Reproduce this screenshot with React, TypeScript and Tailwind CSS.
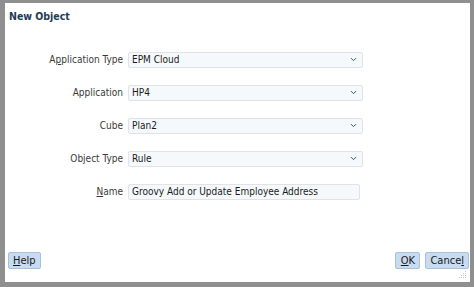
import { ChevronDown } from "lucide-react"

const font = { fontFamily: '"DejaVu Sans Condensed", "Liberation Sans", Arial, sans-serif' }

const fieldCls =
  "h-[16px] flex items-center bg-[#f6f9fc] border border-[#dfe3e8] rounded-[2px] text-[10px] text-[#1a1a1a]"
const btnCls =
  "h-[17px] px-[4px] bg-[#c8dcf1] border border-[#a9c0d8] rounded-[2px] text-[11px] leading-none text-[#1a1a1a]"

function Select({ value }: { value: string }) {
  return (
    <div className={`${fieldCls} w-[235px] justify-between pl-[3px] pr-[4px]`}>
      <span>{value}</span>
      <ChevronDown className="w-[9px] h-[9px] text-[#444]" strokeWidth={2.5} />
    </div>
  )
}

function Row({ label, children }: { label: React.ReactNode; children: React.ReactNode }) {
  return (
    <div className="flex items-center h-[17px]">
      <div className="w-[123px] pr-[5px] text-right text-[10px] text-[#3a3a3a]">{label}</div>
      {children}
    </div>
  )
}

export default function App() {
  return (
    <div className="w-[474px] h-[287px] bg-[#8f8f8f] pl-[5px] pr-[4px] pt-[3px] pb-[5px]" style={font}>
      <div className="h-full bg-white flex flex-col relative">
        <div className="h-[28px] flex items-center pl-[4px] text-[10.5px] font-bold text-[#1f3b55]">New Object</div>
        <div className="flex flex-col gap-[16px] pt-[20px]">
          <Row label={<span>A<u>p</u>plication Type</span>}>
            <Select value="EPM Cloud" />
          </Row>
          <Row label="Application">
            <Select value="HP4" />
          </Row>
          <Row label="Cube">
            <Select value="Plan2" />
          </Row>
          <Row label="Object Type">
            <Select value="Rule" />
          </Row>
          <Row label={<span><u>N</u>ame</span>}>
            <div className={`${fieldCls} w-[232px] pl-[3px]`}>Groovy Add or Update Employee Address</div>
          </Row>
        </div>
        <div className="mt-auto mb-[13px] flex items-center pl-[3px] pr-[1px]">
          <button className={btnCls}>
            <u>H</u>elp
          </button>
          <div className="ml-auto flex gap-[5px]">
            <button className={`${btnCls} w-[25px]`}>
              <u>O</u>K
            </button>
            <button className={btnCls}>
              Cance<u>l</u>
            </button>
          </div>
        </div>
        <svg className="absolute right-[3px] bottom-[3px]" width="8" height="8" viewBox="0 0 8 8">
          <rect x="6" y="0" width="1" height="1" fill="#c4c4c4" />
          <rect x="4" y="2" width="1" height="1" fill="#c4c4c4" />
          <rect x="6" y="2" width="1" height="1" fill="#c4c4c4" />
          <rect x="2" y="4" width="1" height="1" fill="#c4c4c4" />
          <rect x="4" y="4" width="1" height="1" fill="#c4c4c4" />
          <rect x="6" y="4" width="1" height="1" fill="#c4c4c4" />
          <rect x="0" y="6" width="1" height="1" fill="#c4c4c4" />
          <rect x="2" y="6" width="1" height="1" fill="#c4c4c4" />
          <rect x="4" y="6" width="1" height="1" fill="#c4c4c4" />
          <rect x="6" y="6" width="1" height="1" fill="#c4c4c4" />
        </svg>
      </div>
    </div>
  )
}
